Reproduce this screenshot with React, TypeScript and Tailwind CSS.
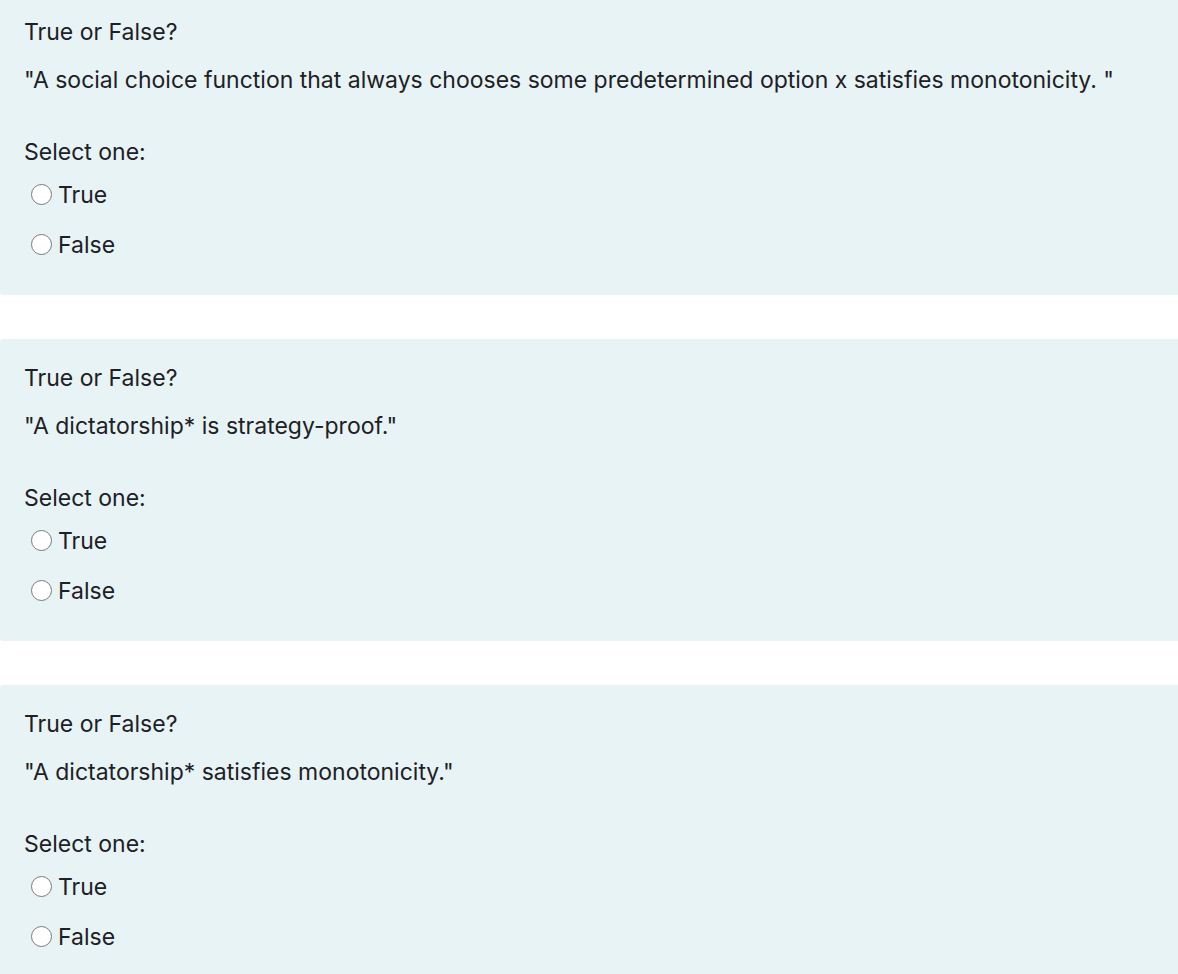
const questions = [
  "\"A social choice function that always chooses some predetermined option x satisfies monotonicity. \"",
  "\"A dictatorship* is strategy-proof.\"",
  "\"A dictatorship* satisfies monotonicity.\"",
]

function Option({ label }: { label: string }) {
  return (
    <label className="flex items-center">
      <span className="ml-[7px] mr-[6px] -mt-[3px] h-[21px] w-[21px] rounded-full border border-[#7a7a7a] bg-white" />
      <span>{label}</span>
    </label>
  )
}

function Question({ text }: { text: string }) {
  return (
    <div className="mb-[44px] h-[302px] rounded-l-[3px] bg-[#e7f3f5] pl-[24px] pt-[23px]">
      <p className="mb-[15px]">True or False?</p>
      <p className="mb-[39px] whitespace-pre">{text}</p>
      <p className="mb-[10px]">Select one:</p>
      <div className="flex flex-col gap-[17px]">
        <Option label="True" />
        <Option label="False" />
      </div>
    </div>
  )
}

export default function App() {
  return (
    <div
      className="-mt-[7px] min-h-screen bg-white text-[23px] leading-[33px] text-[#1d2125]"
      style={{ fontFamily: "Inter, 'Liberation Sans', sans-serif" }}
    >
      {questions.map((q) => (
        <Question key={q} text={q} />
      ))}
    </div>
  )
}
